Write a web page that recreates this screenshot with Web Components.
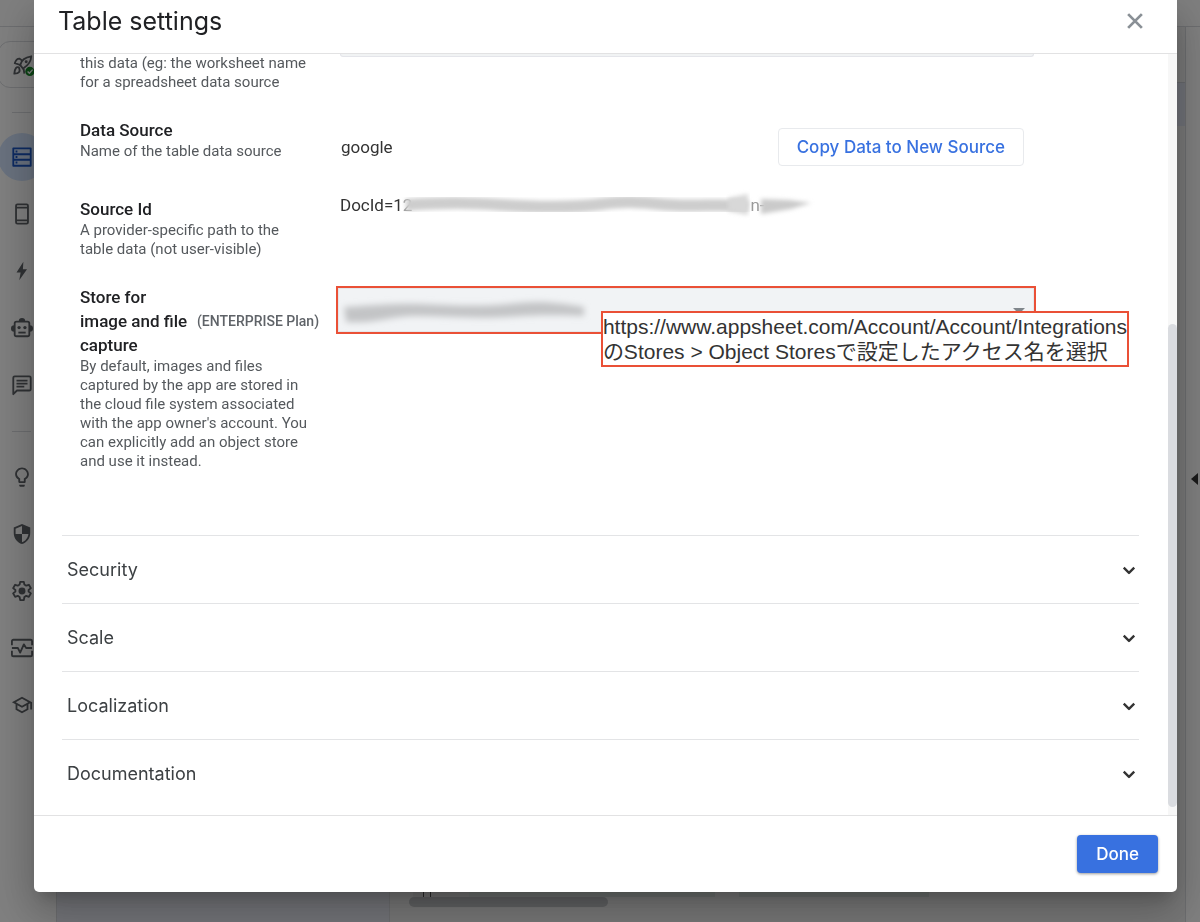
<!DOCTYPE html>
<html lang="en">
<head>
<meta charset="utf-8">
<title>Table settings</title>
<style>
  html, body { margin: 0; height: 100%; }
  body { font-family: Roboto, "Noto Sans CJK JP", sans-serif; color: #202124; overflow: hidden; }
</style>
</head>
<body>
<app-editor></app-editor>
<settings-dialog heading="Table settings">
  <settings-row>
    <span slot="help">this data (eg: the worksheet name for a spreadsheet data source</span>
    <clipped-field></clipped-field>
  </settings-row>
  <settings-row label="Data Source">
    <span slot="help">Name of the table data source</span>
    <source-value action="Copy Data to New Source">google</source-value>
  </settings-row>
  <settings-row label="Source Id">
    <span slot="help">A provider-specific path to the table data (not user-visible)</span>
    <doc-id></doc-id>
  </settings-row>
  <settings-row label="Store for image and file capture" plan="(ENTERPRISE Plan)">
    <span slot="help">By default, images and files captured by the app are stored in the cloud file system associated with the app owner's account. You can explicitly add an object store and use it instead.</span>
    <store-select><note-box>https://www.appsheet.com/Account/Account/Integrations<br>のStores &gt; Object Storesで設定したアクセス名を選択</note-box></store-select>
  </settings-row>
  <settings-section slot="sections">Security</settings-section>
  <settings-section slot="sections">Scale</settings-section>
  <settings-section slot="sections">Localization</settings-section>
  <settings-section slot="sections">Documentation</settings-section>
</settings-dialog>

<script>
const define = (name, render) => customElements.define(name, class extends HTMLElement {
  connectedCallback() {
    if (this.shadowRoot) return;
    const t = document.createElement('template');
    t.innerHTML = render(this);
    this.attachShadow({ mode: 'open' }).append(t.content.cloneNode(true));
  }
});

const line = (body, w = 2) => `<g fill="none" stroke="currentColor" stroke-width="${w}" stroke-linejoin="round">${body}</g>`;
const icons = {
  rocket: line('<path d="M9 12c1-5 5-8.500 12-9.500-.3 6-3.500 10-8.500 13M9 12l-6-2c1-3 3-5 5-5l3 2M12.500 15.500l1 6"/><path d="M7.500 14.500c-2.500-1-4.500 1-5 7 5.500-.3 7-2.500 5-7zM8 11l5 6"/>') + '<circle cx="15.500" cy="8.500" r="1.600" fill="currentColor"/><circle cx="19.500" cy="19" r="5" fill="#188a2a"/><path d="M17 19l2 2 3.500-4" fill="none" stroke="#fff" stroke-width="1.500"/>',
  data: line('<path d="M2.500 2.500h19v19h-19zM2.500 9h19M2.500 15h19"/>') + '<path fill="currentColor" d="M5 5h2v2H5zM5 11h2v2H5zM5 17h2v2H5z"/>',
  phone: line('<rect x="5.500" y="1.500" width="13" height="21" rx="1.500"/><path d="M6 5h12M6 19h12"/>'),
  bolt: '<path fill="currentColor" d="M13.500 2L6 13.500h4.500L9 22l8.500-12H13z"/>',
  robot: line('<rect x="4" y="5" width="16" height="16" rx="2"/><path d="M8 17h8"/>') + '<path fill="currentColor" d="M8.500 4.500a3.500 3.500 0 0 1 7 0zM3.500 9a3.500 3.500 0 0 0 0 7zM20.500 9a3.500 3.500 0 0 1 0 7z"/><circle cx="8.800" cy="11.500" r="1.800" fill="currentColor"/><circle cx="15.200" cy="11.500" r="1.800" fill="currentColor"/>',
  chat: line('<path d="M2.500 22V4A1.500 1.500 0 0 1 4 2.500h16A1.500 1.500 0 0 1 21.500 4v12.500A1.500 1.500 0 0 1 20 18H6.500zM6 7.200h12M6 10.500h12M6 13.800h8.500"/>'),
  bulb: '<path fill="currentColor" d="M9 21.500c0 .55.45 1 1 1h4c.55 0 1-.45 1-1v-1H9v1zm3-20C8.140 1.500 4.500 4.640 4.500 9c0 2.380 1.190 4.470 3.500 5.740V17.500c0 .55.45 1 1 1h6c.55 0 1-.45 1-1v-2.760c2.310-1.270 3.500-3.360 3.500-5.740 0-4.360-3.640-7.500-7.500-7.500zm2.850 11.600l-.85.6V16.500h-4v-2.800l-.85-.6A5 5 0 0 1 6.500 9c0-3 2.500-5.500 5.500-5.500s5.500 2.500 5.500 5.500c0 1.630-1 3.160-2.650 4.100z"/>',
  shield: '<path fill="currentColor" d="M12 1L3 5v6c0 5.550 3.840 10.740 9 12 5.160-1.260 9-6.450 9-12V5l-9-4zm0 10.990h7c-.53 4.120-3.280 7.790-7 8.940V12H5V6.300l7-3.110v8.800z"/>',
  gear: line('<path d="M10 2h4l.6 3 2 1.200 2.900-1 2.200 3.700-2.500 2v1.700l2.500 2-2.200 3.700-2.900-1-2 1.200-.6 3.500h-4l-.6-3.500-2-1.200-2.900 1-2.200-3.700 2.500-2v-1.700l-2.500-2 2.200-3.700 2.900 1 2-1.200z"/>') + '<circle cx="12" cy="12" r="3.800" fill="currentColor"/>',
  monitor: line('<path d="M1 9V4.500A1.500 1.500 0 0 1 2.500 3h19A1.500 1.500 0 0 1 23 4.500V9M1 15v4.500A1.500 1.500 0 0 0 2.500 21h19a1.500 1.500 0 0 0 1.500-1.500V15M1 12h6.500l2.500 5 4-9 2.500 4H23"/>'),
  school: '<path fill="currentColor" d="M12 3L1 9l4 2.180v6L12 21l7-3.820v-6l2-1.090V17h2V9L12 3zm6.820 6L12 12.720 5.180 9 12 5.280 18.820 9zM17 15.990l-5 2.730-5-2.730v-3.720L12 15l5-2.730v3.720z"/>',
  close: line('<path d="M4.500 4.500l15 15M19.500 4.500l-15 15"/>', 3),
  chevron: line('<path d="M3 8l9 9 9-9"/>', 4)
};

define('ui-icon', el => `
  <style>
    :host { display: block; width: 24px; height: 24px; }
    svg { display: block; width: 100%; height: 100%; }
  </style>
  <svg viewBox="0 0 24 24" aria-hidden="true">${icons[el.getAttribute('name')]}</svg>`);

define('rail-item', el => `
  <style>
    :host { display: flex; height: 57px; align-items: center; }
    button { width: 48px; height: 48px; margin: 0 0 0 -2px; padding: 0; border: 0; border-radius: 50%; background: none;
      color: #5f6368; display: grid; place-items: center; }
    :host([selected]) button { background: #d2e3fc; color: #1a56c4; }
    ui-icon { width: 22px; height: 22px; }
  </style>
  <button type="button" aria-label="${el.getAttribute('icon')}"><ui-icon name="${el.getAttribute('icon')}"></ui-icon></button>`);

define('app-editor', () => `
  <style>
    :host { display: grid; height: 100vh; grid-template: 27px 1fr / 56px 334px 1fr 15px; background: #fff; }
    header { grid-column: 1 / -1; border-bottom: 1px solid #dadce0; }
    nav { display: flex; flex-direction: column; }
    .deploy { height: 47px; flex: none; box-sizing: border-box; margin: 14px -8px 0 -2px; border: 1px solid #dadce0; border-radius: 12px; padding: 0 0 0 13px;
      display: flex; align-items: center; background: none; color: #5f6368; }
    .deploy ui-icon { width: 22px; height: 22px; }
    hr { border: 0; height: 1px; background: #dadce0; margin: 18px 12px 16px; width: 19px; flex: none; }
    .deploy + hr { margin: 24px 12px 15px; }
    .list { background: #e8eaf3; border: solid #dadce0; border-width: 0 1px; }
    main { background: #f1f1f1; display: flex; flex-direction: column; justify-content: space-between; }
    .bar { margin-top: 55px; height: 43px; background: #dfe3f0; border-top: 1px solid #cfd2d8; }
    .sheet { display: flex; height: 20px; padding-left: 23px; }
    .cell { width: 56px; background: #e6e6e6; display: flex; gap: 6px; padding-left: 10px; box-sizing: border-box; }
    .cell i { width: 1px; background: #555; }
    .tint { background: #dbe4e0; width: 246px; }
    .tint + .tint { margin-left: 24px; width: 190px; }
    .scroll { width: 199px; height: 10px; border-radius: 5px; background: #c3c5c8; margin: 0 0 15px 19px; }
    aside { background: #fff; border-left: 1px solid #dadce0; display: flex; align-items: center; justify-content: flex-end; }
    aside svg { width: 7px; height: 12px; margin: 8px 2px 0 0; }
  </style>
  <header></header>
  <nav aria-label="Editor">
    <button class="deploy" type="button" aria-label="Deploy"><ui-icon name="rocket"></ui-icon></button>
    <hr>
    <rail-item icon="data" selected></rail-item><rail-item icon="phone"></rail-item><rail-item icon="bolt"></rail-item>
    <rail-item icon="robot"></rail-item><rail-item icon="chat"></rail-item>
    <hr>
    <rail-item icon="bulb"></rail-item><rail-item icon="shield"></rail-item><rail-item icon="gear"></rail-item>
    <rail-item icon="monitor"></rail-item><rail-item icon="school"></rail-item>
  </nav>
  <div class="list"></div>
  <main>
    <div class="bar"></div>
    <div>
      <div class="sheet"><div class="cell"><i></i><i></i></div><div class="tint"></div><div class="tint"></div></div>
      <div class="scroll"></div>
    </div>
  </main>
  <aside><svg viewBox="0 0 7 12" aria-hidden="true"><path d="M7 0v12L0 6z" fill="#333"/></svg></aside>`);

define('settings-dialog', el => `
  <style>
    :host { position: fixed; inset: 0; background: rgba(0,0,0,.5); padding: 0 23px 30px 34px; display: flex; }
    section { flex: 1; min-width: 0; display: flex; flex-direction: column; background: #fff; border-radius: 0 0 5px 5px;
      box-shadow: 0 11px 15px -7px rgba(0,0,0,.2), 0 24px 38px 3px rgba(0,0,0,.14), 0 9px 46px 8px rgba(0,0,0,.12); }
    header { height: 53px; flex: none; box-sizing: border-box; padding: 0 30px 12px 24px; display: flex; align-items: center;
      justify-content: space-between; }
    h1 { margin: 0; font: 400 25px/32px Inter, sans-serif; color: #202124; }
    header button { border: 0; background: none; padding: 0; width: 24px; height: 24px; color: #8a9096; display: grid; place-items: center; }
    .body { flex: 1; min-height: 0; display: flex; border: solid #e2e2e3; border-width: 1px 0; }
    .content { flex: 1; min-width: 0; overflow: hidden; padding-right: 29px; }
    .rows { display: grid; gap: 26px; padding: 0 103px 64px 46px; }
    .sections { margin-left: 28px; }
    .track { width: 9px; display: grid; grid-template-rows: 270fr 484fr 8fr; background: #f7f7f7; }
    .thumb { grid-row: 2; background: #dadce0; border-radius: 5px; }
    footer { height: 76px; flex: none; display: flex; align-items: center; justify-content: flex-end; padding-right: 19px; }
    footer button { height: 38px; padding: 0 19px; border: 0; border-radius: 4px; background: #3871e0; color: #fff;
      font: 500 17px/24px Inter, sans-serif; box-shadow: 0 1px 3px rgba(0,0,0,.4); }
    header ui-icon { width: 22px; height: 22px; }
  </style>
  <section role="dialog" aria-labelledby="t">
    <header><h1 id="t">${el.getAttribute('heading')}</h1><button type="button" aria-label="Close"><ui-icon name="close"></ui-icon></button></header>
    <div class="body">
      <div class="content"><div class="rows"><slot></slot></div><div class="sections"><slot name="sections"></slot></div></div>
      <div class="track"><div class="thumb"></div></div>
    </div>
    <footer><button type="button">Done</button></footer>
  </section>`);

define('settings-row', el => `
  <style>
    :host { display: grid; grid-template-columns: 240px minmax(0, 1fr); column-gap: 20px; color: #202124; }
    .head { display: flex; align-items: center; gap: 8px; font-size: 17px; line-height: 24px; font-weight: 500; }
    .head.narrow .name { width: 109px; flex: none; }
    .plan { font-size: 14px; color: #5f6368; white-space: nowrap; }
    .help { font-size: 15px; line-height: 19px; color: #55595d; width: 232px; }
  </style>
  <div>
    ${el.hasAttribute('label') ? `<div class="head ${el.hasAttribute('plan') ? 'narrow' : ''}"><span class="name">${el.getAttribute('label')}</span>${el.hasAttribute('plan') ? `<span class="plan">${el.getAttribute('plan')}</span>` : ''}</div>` : ''}
    <div class="help"><slot name="help"></slot></div>
  </div>
  <div><slot></slot></div>`);

define('clipped-field', () => `
  <style>
    :host { display: block; height: 2px; margin-right: 2px; background: #f1f3f4; border: 1px solid #e4e5ea; border-top: 0; border-radius: 0 0 5px 5px; }
  </style>`);

define('source-value', el => `
  <style>
    :host { display: flex; justify-content: space-between; align-items: center; padding: 10px 12px 5px 1px; font-size: 17px; line-height: 24px; color: #333; }
    button { height: 38px; padding: 0 18px; border: 1px solid #e8eaed; border-radius: 4px; background: #fff; color: #3871e0;
      font: 500 17px/24px Inter, sans-serif; }
  </style>
  <span><slot></slot></span><button type="button">${el.getAttribute('action')}</button>`);

define('doc-id', () => `
  <style>
    :host { display: flex; align-items: center; height: 16px; font-size: 17px; line-height: 24px; color: #333; white-space: nowrap; }
    i { font-style: normal; color: #999; }
    svg { height: 40px; overflow: visible; flex: none; }
    .long { width: 338px; } .short { width: 50px; }
  </style>
  <span>DocId=1<i>2</i></span>
  <svg class="long" viewBox="0 0 338 40" aria-hidden="true">
    <defs><filter id="b" x="-10%" y="-100%" width="120%" height="300%"><feGaussianBlur stdDeviation="2"/></filter></defs>
    <path filter="url(#b)" fill="none" stroke="#cdcdcd" stroke-width="12" d="M-6 20C40 17 60 18 90 20S160 23 190 19S230 18 260 20S310 18 336 22"/>
    <path filter="url(#b)" fill="#d8d8d8" d="M316 13l20-4v21l-20-4z"/>
  </svg><i>n-</i><svg class="short" viewBox="0 0 50 40" aria-hidden="true">
    <defs><filter id="b" x="-10%" y="-100%" width="120%" height="300%"><feGaussianBlur stdDeviation="2"/></filter></defs>
    <path filter="url(#b)" fill="#cacaca" d="M-4 14l28 1 22 3-20 6-30 5z"/>
  </svg>`);

define('store-select', () => `
  <style>
    :host { display: block; position: relative; margin: 1px 0 0 -4px; border: 2px solid #ea5036; }
    select { display: block; width: 100%; height: 44px; border: 1px solid #e4e6ea; background: #f1f3f5; appearance: none; border-radius: 0; }
    svg { position: absolute; pointer-events: none; }
    .smear { left: 0; top: 0; width: 260px; height: 44px; }
    .caret { right: 9px; top: 20px; width: 12px; height: 6px; }
    ::slotted(note-box) { position: absolute; right: -95px; top: 23px; }
  </style>
  <select aria-label="Store for image and file capture"><option></option></select>
  <svg class="smear" viewBox="0 0 260 44" aria-hidden="true">
    <defs><filter id="s" x="-10%" y="-100%" width="120%" height="300%"><feGaussianBlur stdDeviation="3"/></filter></defs>
    <path filter="url(#s)" fill="#c3c4c6" d="M6 19C40 17 60 15 85 16S140 19 170 16S210 13 246 19V28C210 27 200 27 170 29S110 28 80 28S40 36 8 34z"/>
  </svg>
  <svg class="caret" viewBox="0 0 12 6" aria-hidden="true"><path d="M0 0h12L6 6z" fill="#80868b"/></svg>
  <slot></slot>`);

define('note-box', () => `
  <style>
    :host { display: block; border: 2px solid #ea5036; background: #fff; padding: 1px 0;
      font: 21px/25px "Liberation Sans", "Noto Sans CJK JP", sans-serif; color: #333; width: max-content; white-space: nowrap; }
  </style>
  <slot></slot>`);

define('settings-section', () => `
  <style>
    :host { display: block; border-top: 1px solid #e3e4e6; }
    button { width: 100%; height: 67px; padding: 0 3px 0 5px; border: 0; background: none; display: flex; align-items: center;
      justify-content: space-between; color: #3c4043; font: 400 18px/28px Inter, sans-serif; }
    ui-icon { width: 14px; height: 14px; color: #333; }
  </style>
  <button type="button" aria-expanded="false"><span><slot></slot></span><ui-icon name="chevron"></ui-icon></button>`);
</script>
</body>
</html>
